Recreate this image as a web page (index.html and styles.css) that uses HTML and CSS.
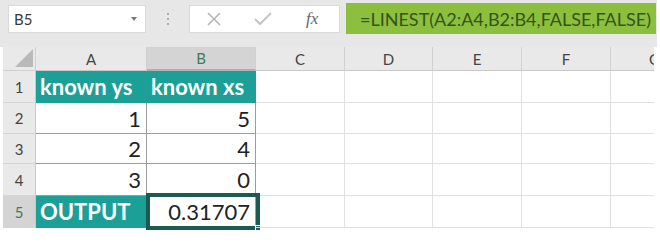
FILE: index.html
```html
<!DOCTYPE html>
<html lang="en">
<head>
    <meta charset="UTF-8">
    <meta name="viewport" content="width=device-width, initial-scale=1.0">
    <title>LINEST</title>
    <link rel="stylesheet" href="styles.css">
</head>
<body>
    <div class="toolbar">
        <div class="namebox"><span>B5</span><span class="caret"></span></div>
        <div class="dots"><i></i><i></i><i></i></div>
        <div class="fxbox">
            <svg class="ico" width="16" height="16" viewBox="0 0 16 16"><path d="M2 2 L14 14 M14 2 L2 14" stroke="#b5b5b5" stroke-width="1.6" fill="none"/></svg>
            <svg class="ico" width="18" height="16" viewBox="0 0 18 16"><path d="M1 8 L6 13 L17 2" stroke="#c4c4c4" stroke-width="2" fill="none"/></svg>
            <span class="fx">fx</span>
        </div>
        <div class="formula">=LINEST(A2:A4,B2:B4,FALSE,FALSE)</div>
    </div>

    <div class="sheet">
        <div class="corner"><span></span></div>
        <div class="colhead">A</div>
        <div class="colhead active">B</div>
        <div class="colhead">C</div>
        <div class="colhead">D</div>
        <div class="colhead">E</div>
        <div class="colhead">F</div>
        <div class="colhead last">G</div>

        <div class="rowhead">1</div>
        <div class="cell head">known ys</div>
        <div class="cell head">known xs</div>
        <div class="cell"></div><div class="cell"></div><div class="cell"></div><div class="cell"></div><div class="cell last"></div>

        <div class="rowhead">2</div>
        <div class="cell num">1</div>
        <div class="cell num">5</div>
        <div class="cell"></div><div class="cell"></div><div class="cell"></div><div class="cell"></div><div class="cell last"></div>

        <div class="rowhead">3</div>
        <div class="cell num">2</div>
        <div class="cell num">4</div>
        <div class="cell"></div><div class="cell"></div><div class="cell"></div><div class="cell"></div><div class="cell last"></div>

        <div class="rowhead">4</div>
        <div class="cell num">3</div>
        <div class="cell num">0</div>
        <div class="cell"></div><div class="cell"></div><div class="cell"></div><div class="cell"></div><div class="cell last"></div>

        <div class="rowhead active">5</div>
        <div class="cell head">OUTPUT</div>
        <div class="cell num selected">0.31707<span class="sel"><span class="handle"></span></span></div>
        <div class="cell"></div><div class="cell"></div><div class="cell"></div><div class="cell"></div><div class="cell last"></div>
    </div>
</body>
</html>
```

FILE: styles.css
```css
*{
    margin: 0;
    padding: 0;
    box-sizing: border-box;
}
body{
    background: #fff;
    font-family: Lato, "Liberation Sans", sans-serif;
    width: 660px;
    height: 248px;
    overflow: hidden;
}
.toolbar{
    display: flex;
    align-items: flex-start;
    background: #e7e7e7;
    width: 657px;
    height: 47px;
    padding: 3px 0 0 8px;
}
.namebox{
    margin-top: 2px;
    width: 138px;
    height: 28px;
    background: #fff;
    border: 1px solid #dadada;
    display: flex;
    align-items: center;
    justify-content: space-between;
    padding: 0 8px 0 5px;
    font-size: 15px;
    color: #3a3a3a;
}
.caret{
    width: 0;
    height: 0;
    border-left: 3px solid transparent;
    border-right: 3px solid transparent;
    border-top: 4px solid #777;
}
.dots{
    width: 43px;
    height: 32px;
    display: flex;
    flex-direction: column;
    align-items: center;
    justify-content: center;
    gap: 3px;
}
.dots i{
    width: 2px;
    height: 2px;
    background: #b0b0b0;
}
.fxbox{
    margin-top: 2px;
    width: 151px;
    height: 28px;
    background: #fff;
    border: 1px solid #dadada;
    display: flex;
    align-items: center;
    padding-left: 16px;
}
.ico{
    margin-right: 32px;
}
.ico + .ico{
    margin-right: 34px;
}
.fx{
    font-family: "Liberation Serif", serif;
    font-style: italic;
    font-size: 17px;
    color: #666;
}
.formula{
    margin-left: 6px;
    width: 310px;
    height: 31px;
    background: #8dbf3e;
    color: #34541a;
    font-size: 18px;
    display: flex;
    align-items: center;
    padding-left: 14px;
    white-space: nowrap;
    overflow: hidden;
}

.sheet{
    display: grid;
    grid-template-columns: 33px 111px 109px 89px 88px 89px 89px 43px;
    grid-template-rows: 24px 32px 31px 30px 32px 32px;
    margin-left: 3px;
    width: 651px;
}
.corner{
    background: #e9e9e9;
    border-right: 1px solid #d0d0d0;
    border-bottom: 1px solid #d0d0d0;
    position: relative;
}
.corner span{
    position: absolute;
    right: 2px;
    bottom: 3px;
    width: 0;
    height: 0;
    border-left: 18px solid transparent;
    border-bottom: 18px solid #b9b9b9;
}
.colhead{
    background: #e9e9e9;
    border-right: 1px solid #d0d0d0;
    border-bottom: 1px solid #c8c8c8;
    display: flex;
    align-items: center;
    justify-content: center;
    font-size: 15px;
    color: #444;
}
.colhead.active{
    background: #d4d4d4;
    color: #3f7a5c;
    border-bottom: 2px solid #b0b0b0;
}
.colhead.last{
    border-right: none;
    justify-content: flex-start;
    padding-left: 38px;
    overflow: hidden;
}
.rowhead{
    background: #e9e9e9;
    border-right: 1px solid #c8c8c8;
    border-bottom: 1px solid #d4d4d4;
    display: flex;
    align-items: center;
    justify-content: center;
    font-size: 15px;
    color: #444;
}
.rowhead.active{
    background: #d4d4d4;
    color: #3f7a5c;
}
.cell{
    border-right: 1px solid #e0e0e0;
    border-bottom: 1px solid #e0e0e0;
    display: flex;
    align-items: center;
    white-space: nowrap;
    position: relative;
}
.cell.last{
    border-right: none;
}
.cell.head{
    background: #1c9f97;
    border-color: #1c9f97;
    color: #fff;
    font-weight: 700;
    font-size: 22px;
    padding-left: 4px;
}
.cell.num{
    justify-content: flex-end;
    padding-right: 5px;
    font-size: 22px;
    color: #222;
    border-right-color: #9c9c9c;
    border-bottom-color: #9c9c9c;
}
.selected{
    padding-right: 6px;
}
.sel{
    position: absolute;
    left: -1px;
    top: -3px;
    right: -5px;
    bottom: -3px;
    border: 4px solid #1d5a54;
}
.handle{
    position: absolute;
    right: -5px;
    bottom: -5px;
    width: 6px;
    height: 6px;
    background: #1d5a54;
    border: 1px solid #fff;
}
```
